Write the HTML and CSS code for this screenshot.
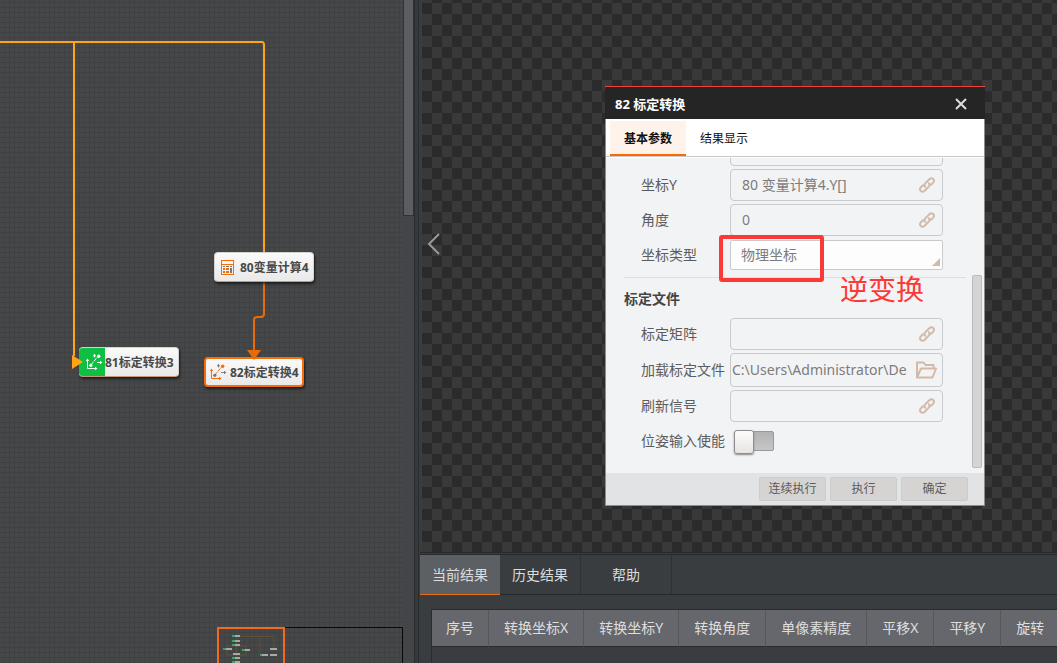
FILE: index.html
```html
<!DOCTYPE html>
<html lang="zh-CN">
<head>
<meta charset="utf-8">
<title>标定转换</title>
<link rel="stylesheet" href="styles.css">
</head>
<body>
<svg class="defs" width="0" height="0" aria-hidden="true">
  <symbol id="link" viewBox="0 0 18 18">
    <g fill="none" stroke="#d3b9a8" stroke-width="2" stroke-linecap="round">
      <path d="M7.2 10.8 Q5.6 9.2 7.2 7.400 L11.600 3 Q13.400 1.400 15.200 3 Q16.800 4.800 15.200 6.600 L13 8.800"/>
      <path d="M10.800 7.200 Q12.400 8.800 10.800 10.600 L6.400 15 Q4.600 16.600 2.800 15 Q1.200 13.200 2.800 11.400 L5 9.200"/>
    </g>
  </symbol>
  <symbol id="axes" viewBox="0 0 18 18">
    <path class="axis" d="M2.500 8v7.500H10"/>
    <path class="tip" d="M2.500 5.500L.8 8h3.400zM12.500 15.500L10 13.800v3.400z"/>
    <path class="axis-b" d="M9.500 3v1.500M12 9.500H15"/>
    <path class="tip-b" d="M9.500 .8L7.800 3.300h3.400zM17.500 9.500L15 7.800v3.400z"/>
    <path class="trend" d="M5.500 12.300L13.200 3.300" stroke-dasharray="4 1"/>
    <circle class="dot-a" cx="5.800" cy="12.300" r="1.600"/>
    <circle class="dot-b" cx="13.700" cy="3.300" r="1.700"/>
  </symbol>
</svg>
<div class="app">
  <section class="flow">
    <svg class="wires" width="404" height="400" aria-hidden="true">
      <g fill="none" stroke="#ffa514" stroke-width="2">
        <path d="M0 42H262Q264 42 264 45V254"/>
        <path d="M74 42V356"/>
      </g>
      <path d="M264 280V314Q264 317 261 317H257Q254 317 254 320V352" fill="none" stroke="#ea6a04" stroke-width="2"/>
    </svg>
    <div class="node node-80">
      <svg width="13" height="15" viewBox="0 0 13 15" aria-hidden="true">
        <rect x=".5" y=".5" width="12" height="14" fill="none" stroke="#f36d0a"/>
        <path d="M0 4.500h13" stroke="#f36d0a"/>
        <path d="M2 6.500h2M5 6.500h3M9 6.500h2" stroke="#777"/>
        <path d="M2 9h2M5 9h3M2 12h2M5 12h3" stroke="#f36d0a" stroke-width="2"/>
        <path d="M10 8v5" stroke="#777" stroke-width="2"/>
      </svg>
      <span class="name">80变量计算4</span>
    </div>
    <div class="node node-81">
      <span class="state"><svg class="axes white" width="18" height="18"><use href="#axes"/></svg></span>
      <span class="name">81标定转换3</span>
    </div>
    <div class="node node-82">
      <svg class="axes" width="18" height="18"><use href="#axes"/></svg>
      <span class="name">82标定转换4</span>
    </div>
    <svg class="arrows" width="404" height="400" aria-hidden="true">
      <path d="M72 355L83 362L72 369z" fill="#ffa514"/>
      <path d="M247 350H261L254 360z" fill="#ea6a04"/>
    </svg>
    <div class="minimap">
      <div class="viewport">
        <svg width="64" height="34" viewBox="0 0 64 34" aria-hidden="true">
          <path d="M18 7.500H55V21M41 8V26M17 8V34M8 21V17H27V26H8z" fill="none" stroke="#5d503c"/>
          <g fill="#aaa8a5"><path d="M14 6h7v2h-7zM14 11h7v2h-7zM14 15h7v2h-7zM6 19h7v2H6zM24 20h7v2h-7zM51 19h7v2h-7zM42 25h7v2h-7zM51 25h7v2h-7zM14 24h7v2h-7zM14 28h7v2h-7zM14 32h7v2h-7z"/></g>
          <g fill="#3aa662"><path d="M13 6h3v2h-3zM13 11h3v2h-3zM13 15h3v2h-3zM4 19h3v2H4zM23 20h3v2h-3zM41 25h2v2h-2zM13 28h3v2h-3zM13 32h3v2h-3z"/></g>
        </svg>
      </div>
    </div>
  </section>
  <div class="flow-scroll"><div class="thumb"></div></div>
  <div class="splitter"></div>
  <main class="work">
    <section class="viewer">
      <button class="prev" aria-label="收起"><svg width="14" height="22" viewBox="0 0 14 22"><path d="M12 1L2 11L12 21" fill="none" stroke="#999" stroke-width="2"/></svg></button>
    </section>
    <section class="results">
      <nav class="tabs">
        <button class="tab active">当前结果</button>
        <button class="tab">历史结果</button>
        <button class="tab last">帮助</button>
      </nav>
      <div class="table-wrap">
        <table>
          <thead><tr><th>序号</th><th>转换坐标X</th><th>转换坐标Y</th><th>转换角度</th><th>单像素精度</th><th>平移X</th><th>平移Y</th><th>旋转</th><td></td></tr></thead>
        </table>
      </div>
    </section>
  </main>
</div>

<div class="dialog" role="dialog" aria-labelledby="dlg-title">
  <header class="dlg-head">
    <h1 id="dlg-title">82 标定转换</h1>
    <button class="close" aria-label="关闭"><svg width="12" height="12" viewBox="0 0 12 12"><path d="M1 1L11 11M11 1L1 11" stroke="#ddd" stroke-width="2"/></svg></button>
  </header>
  <nav class="dlg-tabs">
    <button class="dlg-tab active">基本参数</button>
    <button class="dlg-tab">结果显示</button>
  </nav>
  <div class="dlg-body">
    <form class="form">
      <div class="row first"><div class="field"><input aria-label="坐标"></div></div>
      <div class="row"><label for="y">坐标Y</label><div class="field"><input id="y" value="80 变量计算4.Y[]"><svg class="ico" width="18" height="18"><use href="#link"/></svg></div></div>
      <div class="row"><label for="angle">角度</label><div class="field"><input id="angle" value="0"><svg class="ico" width="18" height="18"><use href="#link"/></svg></div></div>
      <div class="row"><label for="type">坐标类型</label><div class="field choice"><select id="type"><option>物理坐标</option></select></div></div>
      <h2>标定文件</h2>
      <div class="row"><label for="matrix">标定矩阵</label><div class="field"><input id="matrix"><svg class="ico" width="18" height="18"><use href="#link"/></svg></div></div>
      <div class="row"><label for="file">加载标定文件</label><div class="field file"><input id="file" value="C:\Users\Administrator\De"><button type="button" class="open" aria-label="打开文件"><svg width="21" height="18" viewBox="0 0 21 18"><path d="M1 16.500V1.500H7.500L9.500 4H17.500V7M1 16.500L5 7.500H20L16.500 16.500z" fill="none" stroke="#d3b9a8" stroke-width="2" stroke-linejoin="round"/></svg></button></div></div>
      <div class="row"><label for="signal">刷新信号</label><div class="field"><input id="signal"><svg class="ico" width="18" height="18"><use href="#link"/></svg></div></div>
      <div class="row"><label for="pose">位姿输入使能</label><input id="pose" class="switch" type="checkbox"></div>
    </form>
    <div class="dlg-scroll"></div>
  </div>
  <footer class="dlg-foot">
    <button>连续执行</button><button>执行</button><button>确定</button>
  </footer>
  <div class="mark-box"></div>
  <div class="mark-text">逆变换</div>
</div>
</body>
</html>
```
FILE: styles.css
```css
* { box-sizing: border-box; }
body {
  margin: 0;
  overflow: hidden;
  background: #3a3d40;
  font: 14px/20px "Noto Sans", "Noto Sans CJK SC", sans-serif;
}
button, input, select { margin: 0; padding: 0; border: 0; background: none; font: inherit; color: inherit; }
svg { display: block; flex: none; }
.defs { position: absolute; }
.app { display: flex; height: 100vh; position: relative; }

/* flow canvas */
.flow {
  position: relative;
  flex: 0 0 403px;
  overflow: hidden;
  background-color: #464749;
  background-image: linear-gradient(#404143 1px, transparent 1px), linear-gradient(90deg, #404143 1px, transparent 1px);
  background-size: 5px 5px;
  background-position: 4px 2px;
}
.wires, .arrows { position: absolute; left: 0; top: 0; }
.node {
  position: absolute;
  display: flex;
  align-items: center;
  width: 100px;
  height: 30px;
  border: 1px solid #d5d3d1;
  border-bottom-color: #c89a7c;
  border-radius: 4px;
  background: linear-gradient(#fafaf9, #e9e9ea);
  box-shadow: 1px 2px 3px rgba(0, 0, 0, .6);
  color: #484848;
  font-size: 12px;
  font-weight: 700;
  white-space: nowrap;
  overflow: hidden;
}
.name { padding-top: 2px; }
.node-80 { left: 214px; top: 252px; padding-left: 6px; gap: 6px; }
.node-81 { left: 79px; top: 347px; border-left: 0; }
.node-82 { left: 204px; top: 357px; padding-left: 3px; gap: 3px; border: 2px solid #f66d0b; }
.state { display: flex; align-items: center; justify-content: center; align-self: stretch; width: 26px; padding-left: 4px; background: #0fbf43; }
.axis, .axis-b, .trend { fill: none; stroke: #f36d0a; stroke-width: 1; }
.axis-b { stroke: #888; }
.tip, .dot-b { fill: #f36d0a; }
.tip-b, .dot-a { fill: #777; }
.white { filter: brightness(0) invert(1); }
.minimap { position: absolute; left: 217px; top: 627px; width: 187px; height: 80px; border: 1px solid #080808; border-right-width: 2px; }
.viewport { width: 68px; height: 80px; margin: -1px; border: 2px solid #f4691b; }
.flow-scroll { flex: 0 0 11px; background: #444548; }
.thumb { height: 216px; background: #5b5d60; border: 1px solid #303234; border-top: 0; }
.splitter { flex: 0 0 5px; background: #373a3d; border: solid #292c2e; border-width: 0 1px; }

/* work area */
.work { flex: 1; min-width: 0; display: flex; flex-direction: column; padding-left: 1px; }
.viewer {
  flex: 1;
  display: flex;
  align-items: center;
  margin-left: 2px;
  padding: 0 5px 64px;
  background: conic-gradient(#393939 25%, #2b2b2b 0 50%, #393939 0 75%, #2b2b2b 0) 0 3px / 20px 22px;
}
.results { height: 111px; overflow: hidden; border-top: 1px solid #27292b; }
.tabs { display: flex; height: 41px; margin-top: 1px; border-top: 1px solid #27292b; border-bottom: 1px solid #25282a; }
.tab { width: 81px; border-right: 1px solid #2f3234; color: #dcdcdc; }
.tab.active { width: 80px; background: #5c5f64; border: 0; box-shadow: 0 1px #ea6c14; }
.tab.last { width: 91px; }
.table-wrap { margin: 14px 0 0 11px; border: 1px solid #292b2d; border-right: 0; height: 80px; overflow: hidden; }
table { width: 100%; border-collapse: separate; border-spacing: 0; }
th, td {
  height: 37px;
  border-bottom: 1px solid #292b2d;
  background: #66676c;
}
th {
  width: 1px;
  padding: 0 15px;
  border-right: 1px solid #55565a;
  color: #dedede;
  font-weight: 400;
  white-space: nowrap;
}
th:first-child { padding: 0 14px; }
td { padding: 0; }

/* dialog */
.dialog {
  position: absolute;
  left: 605px;
  top: 86px;
  width: 380px;
  border: 1px solid #8d8d8d;
  border-top-color: #f0403a;
  background: #f2f3f5;
  color: #5c5c5c;
}
.dlg-head { display: flex; align-items: center; justify-content: space-between; height: 32px; margin: 0 -1px; padding: 1px 18px 0 10px; background: #252525; color: #fff; }
.dlg-head h1 { margin: 0; font-size: 13px; line-height: 20px; }
.dlg-tabs { display: flex; height: 39px; padding: 2px 0 0 4px; background: #fff; box-shadow: inset 0 -1px #fff, inset 0 -2px #cfc7c5; font-size: 12px; color: #111; }
.dlg-tab { width: 76px; height: 35px; }
.dlg-tab.active { background: #fff2ea; border-bottom: 2px solid #f86a04; padding-top: 2px; font-weight: 700; }
.dlg-body { display: flex; align-items: flex-end; height: 315px; overflow: hidden; }
.form { flex: 1; align-self: flex-start; display: flex; flex-direction: column; gap: 3px; margin-top: -24px; padding: 0 0 0 18px; }
.row { display: flex; align-items: center; min-height: 32px; padding-left: 17px; }
.row.first { padding-left: 106px; }
.row label { width: 89px; }
.field { display: flex; align-items: center; width: 213px; height: 32px; border: 1px solid #c8cacc; border-radius: 4px; padding: 0 6px 0 11px; color: #7c7c7c; }
.field input { flex: 1; min-width: 0; }
.field.choice { position: relative; height: 30px; padding-left: 10px; background: #fdfdfd; border-radius: 2px; }
.choice select { flex: 1; appearance: none; }
.choice::after { content: ""; position: absolute; right: 2px; bottom: 3px; border: solid transparent; border-width: 0 0 8px 8px; border-bottom-color: #d3b9a8; }
.field.file { height: 34px; padding: 0 5px 0 1px; }
.form h2 { width: 342px; margin: 3px 0 0; padding: 11px 0 6px; border-top: 1px solid #dcdee0; font-size: 14px; line-height: 20px; color: #444; }
.switch { appearance: none; display: flex; width: 40px; height: 20px; margin-left: 4px; border: 1px solid #999; border-radius: 2px; background: linear-gradient(#b3b3b3, #c6c6c6); }
.switch::before { content: ""; width: 18px; height: 22px; margin: -2px -1px; border: 1px solid #8d8d8d; border-radius: 3px; background: linear-gradient(#fdfcfb, #e6e5e4); box-shadow: 0 1px 2px #888; }
.dlg-scroll { flex: 0 0 10px; height: 193px; margin: 0 2px 5px 0; background: #d5d4d3; border: 1px solid #b9bbbd; border-radius: 2px; }
.dlg-foot { display: flex; justify-content: flex-end; gap: 4px; height: 32px; padding: 4px 16px; background: #e2e3e5; font-size: 12px; }
.dlg-foot button { width: 67px; background: #d5d4d3; border: 1px solid #cccccb; border-radius: 2px; }
.mark-box { position: absolute; left: 113px; top: 148px; width: 105px; height: 47px; border: 4px solid #fb3936; border-radius: 3px; }
.mark-text { position: absolute; left: 234px; top: 182px; font-size: 28px; line-height: 40px; color: #fb3936; }
```
